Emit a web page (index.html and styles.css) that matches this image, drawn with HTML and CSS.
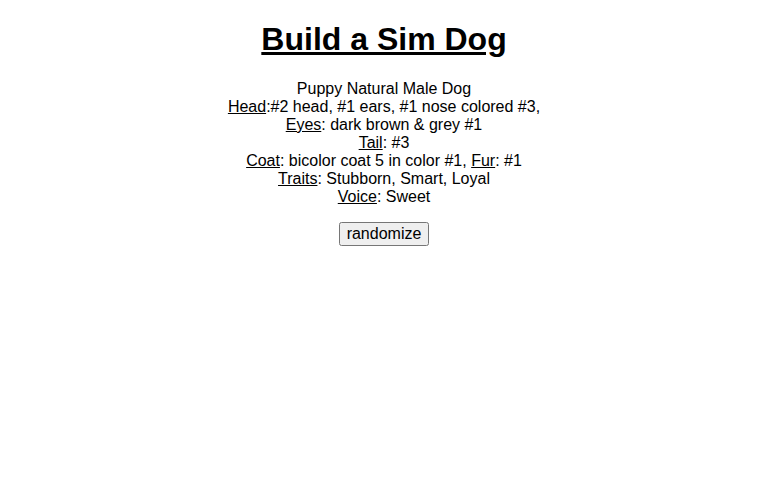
FILE: index.html
```html
<!DOCTYPE html>
<html lang="en">
<head>
  <meta charset="UTF-8" />
  <title>Build a Sim Dog</title>
  <link rel="stylesheet" href="styles.css">
</head>
<body>
  <h1 class="title"><u>Build a Sim Dog</u></h1>

  <div class="dog">
    <div>Puppy Natural Male Dog</div>
    <div><u>Head</u>:#2 head, #1 ears, #1 nose colored #3,</div>
    <div><u>Eyes</u>: dark brown &amp; grey #1</div>
    <div><u>Tail</u>: #3</div>
    <div><u>Coat</u>: bicolor coat 5 in color #1, <u>Fur</u>: #1</div>
    <div><u>Traits</u>: Stubborn, Smart, Loyal</div>
    <div><u>Voice</u>: Sweet</div>
  </div>

  <p class="actions">
    <button class="random-btn">randomize</button>
  </p>
</body>
</html>
```

FILE: styles.css
```css
body {
  margin: 0;
  font-family: "Liberation Sans", Arial, sans-serif;
  color: #000;
  background-color: #fff;
  text-align: center;
}

.title {
  font-size: 2em;
  margin: 21px 0 22px;
}

.dog {
  font-size: 16px;
  line-height: 18px;
}

.actions {
  margin: 16px 0;
}

.random-btn {
  font-family: "Liberation Sans", Arial, sans-serif;
  font-size: 16px;
  padding: 1px 6px;
}
```
